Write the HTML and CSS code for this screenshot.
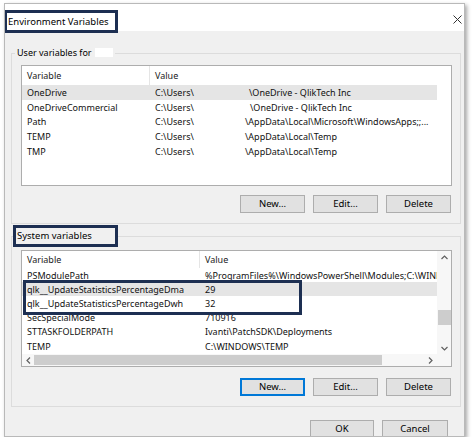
FILE: index.html
```html
<!DOCTYPE html>
<html>
<head>
<meta charset="utf-8">
<title>Environment Variables</title>
<link rel="stylesheet" href="styles.css">
</head>
<body>
<div class="window">
  <div class="titlebar">
    <span class="title">Environment Variables</span>
    <svg class="close" width="9" height="9" viewBox="0 0 9 9"><path d="M0.5 0.5L8.5 8.5M8.5 0.5L0.5 8.5" stroke="#333" stroke-width="1" fill="none"/></svg>
  </div>
  <div class="content">
    <fieldset class="group group-user">
      <legend class="legend-user">User variables for <span class="redact"></span></legend>
      <div class="list list-user">
        <div class="row head"><span class="c1 u1">Variable</span><span class="c2">Value</span></div>
        <div class="row r-user sel"><span class="c1 u1">OneDrive</span><span class="c2"><span class="pre pre-a">C:\Users\</span>\OneDrive - QlikTech Inc</span></div>
        <div class="row r-user"><span class="c1 u1">OneDriveCommercial</span><span class="c2"><span class="pre pre-b">C:\Users\</span>\OneDrive - QlikTech Inc</span></div>
        <div class="row r-user"><span class="c1 u1">Path</span><span class="c2"><span class="pre">C:\Users\</span>\AppData\Local\Microsoft\WindowsApps;;...</span></div>
        <div class="row r-user"><span class="c1 u1">TEMP</span><span class="c2"><span class="pre">C:\Users\</span>\AppData\Local\Temp</span></div>
        <div class="row r-user"><span class="c1 u1">TMP</span><span class="c2"><span class="pre">C:\Users\</span>\AppData\Local\Temp</span></div>
      </div>
      <div class="buttons">
        <button class="btn">New...</button>
        <button class="btn">Edit...</button>
        <button class="btn">Delete</button>
      </div>
    </fieldset>

    <fieldset class="group group-sys">
      <legend class="legend-sys">System variables</legend>
      <div class="list list-sys">
        <div class="rows">
          <div class="row head head-sys"><span class="c1 s1">Variable</span><span class="c2">Value</span></div>
          <div class="row r-sys"><span class="c1 s1">PSModulePath</span><span class="c2">%ProgramFiles%\WindowsPowerShell\Modules;C:\WINDOWS\system32\WindowsPowerShell</span></div>
          <div class="row r-sys sel"><span class="c1 s1">qlk__UpdateStatisticsPercentageDma</span><span class="c2">29</span></div>
          <div class="row r-sys"><span class="c1 s1">qlk__UpdateStatisticsPercentageDwh</span><span class="c2">32</span></div>
          <div class="row r-sys"><span class="c1 s1">SecSpecialMode</span><span class="c2">710916</span></div>
          <div class="row r-sys"><span class="c1 s1">STTASKFOLDERPATH</span><span class="c2">Ivanti\PatchSDK\Deployments</span></div>
          <div class="row r-sys"><span class="c1 s1">TEMP</span><span class="c2">C:\WINDOWS\TEMP</span></div>
        </div>
        <div class="vscroll">
          <svg class="arrow" width="7" height="5" viewBox="0 0 7 5"><path d="M0.5 4L3.5 1L6.5 4" stroke="#606060" stroke-width="1.2" fill="none"/></svg>
          <div class="vtrack"><div class="vthumb"></div></div>
          <svg class="arrow" width="7" height="5" viewBox="0 0 7 5"><path d="M0.5 1L3.5 4L6.5 1" stroke="#606060" stroke-width="1.2" fill="none"/></svg>
        </div>
        <div class="hscroll">
          <svg class="arrow" width="5" height="7" viewBox="0 0 5 7"><path d="M4 0.5L1 3.5L4 6.5" stroke="#606060" stroke-width="1.2" fill="none"/></svg>
          <div class="hthumb"></div>
          <svg class="arrow" width="5" height="7" viewBox="0 0 5 7"><path d="M1 0.5L4 3.5L1 6.5" stroke="#606060" stroke-width="1.2" fill="none"/></svg>
        </div>
        <div class="corner"></div>
        <div class="annot"></div>
      </div>
      <div class="buttons">
        <button class="btn focus">New...</button>
        <button class="btn">Edit...</button>
        <button class="btn">Delete</button>
      </div>
    </fieldset>

    <div class="dialog-buttons">
      <button class="btn btn-ok">OK</button>
      <button class="btn btn-cancel">Cancel</button>
    </div>
  </div>
</div>
</body>
</html>
```

FILE: styles.css
```css
* { box-sizing: border-box; }

html, body {
  margin: 0;
  padding: 0;
  background: #ffffff;
}

body {
  font-family: "Noto Sans", "Open Sans", sans-serif;
  font-size: 9px;
  color: #111;
}

.window {
  margin: 3px 0 0 4px;
  width: 461px;
  height: 434px;
  border: 1px solid #b9b9b9;
  background: #f0f0f0;
  box-shadow: 2px 2px 4px rgba(0, 0, 0, 0.35);
  overflow: hidden;
  display: flex;
  flex-direction: column;
}

.titlebar {
  height: 27px;
  flex: none;
  background: #ffffff;
  display: flex;
  justify-content: space-between;
  align-items: flex-end;
}

.title {
  display: inline-block;
  width: 114px;
  height: 23px;
  margin: 0 0 -2px -1px;
  padding: 0 0 0 1px;
  border: 3px solid #1d2f52;
  background: #ffffff;
  line-height: 17px;
  color: #000;
  font-size: 9.5px;
}

.close {
  align-self: center;
  margin: 4px 2px 0 0;
}

.content {
  flex: 1;
  padding: 0 0 0 6px;
}

.group {
  width: 450px;
  margin: 15px 0 0 0;
  padding: 5px 8px 10px 9px;
  border: 1px solid #dcdcdc;
  min-width: 0;
}

.legend-user {
  padding: 0 2px;
  margin-left: -6px;
  line-height: 14px;
  height: 14px;
  color: #000;
  font-size: 9px;
}

.redact {
  display: inline-block;
  width: 18px;
  height: 9px;
  margin-left: 1px;
  background: #ffffff;
  vertical-align: -1px;
}

.group-sys {
  margin-top: 1px;
  padding-top: 3px;
}

.legend-sys {
  margin-left: -8px;
  padding: 0 0 0 1px;
  width: 105px;
  height: 22px;
  border: 3px solid #1d2f52;
  line-height: 16px;
  color: #000;
  font-size: 9.5px;
}

.list {
  width: 431px;
  background: #ffffff;
  border: 1px solid #adadad;
}

.list-user {
  height: 121px;
  padding: 0;
}

.row {
  display: flex;
  white-space: nowrap;
  align-items: center;
}

.head {
  height: 19px;
  color: #222;
}

.head .c1 {
  border-right: 1px solid #e5e5e5;
  height: 100%;
  display: flex;
  align-items: center;
}

.head-sys {
  height: 17px;
}

.r-user {
  height: 14.7px;
  width: 415px;
}

.r-sys {
  height: 14.2px;
  width: 415px;
}

.sel {
  background: #e5e5e5;
}

.c1 {
  flex: none;
  padding-left: 5px;
  overflow: hidden;
}

.u1 { width: 128px; }
.s1 { width: 178px; }

.c2 {
  padding-left: 5px;
}

.pre {
  display: inline-block;
  width: 90px;
}
.pre-a { width: 94px; }
.pre-b { width: 95px; }

.list-sys {
  height: 117px;
  position: relative;
  display: grid;
  grid-template-columns: 1fr 14px;
  grid-template-rows: 1fr 12px;
}

.rows {
  overflow: hidden;
}

.vscroll {
  background: #f7f7f7;
  display: flex;
  flex-direction: column;
  align-items: center;
  padding: 4px 0 3px;
}

.vtrack {
  flex: 1;
  width: 100%;
  padding-top: 50px;
}

.vthumb {
  width: 13px;
  height: 15px;
  margin-left: 1px;
  background: #cdcdcd;
}

.hscroll {
  background: #f7f7f7;
  display: flex;
  align-items: center;
  padding: 0 4px;
}

.hthumb {
  width: 348px;
  height: 10px;
  margin-left: 3px;
  background: #cdcdcd;
}

.hscroll .arrow:last-child {
  margin-left: auto;
}

.corner {
  background: #f7f7f7;
}

.annot {
  position: absolute;
  left: 1px;
  top: 29px;
  width: 279px;
  height: 35px;
  border: 3px solid #1d2f52;
  pointer-events: none;
}

.buttons {
  display: flex;
  justify-content: flex-end;
  gap: 8px;
  margin: 9px 0 0 0;
  padding-right: 1px;
  width: 431px;
}

.group-sys .buttons {
  margin-top: 11px;
}

.btn {
  width: 65px;
  height: 18px;
  margin: 0;
  padding: 0;
  border: 1px solid #adadad;
  background: #e1e1e1;
  font-family: "Noto Sans", "Open Sans", sans-serif;
  font-size: 9.5px;
  color: #000;
  line-height: 16px;
}

.btn.focus {
  border: 1px solid #0078d7;
  box-shadow: inset 0 0 0 1px #0078d7;
}

.dialog-buttons {
  display: flex;
  gap: 8px;
  margin: 13px 0 0 299px;
}

.btn-ok { width: 64px; }
.btn-cancel { width: 66px; }
```
